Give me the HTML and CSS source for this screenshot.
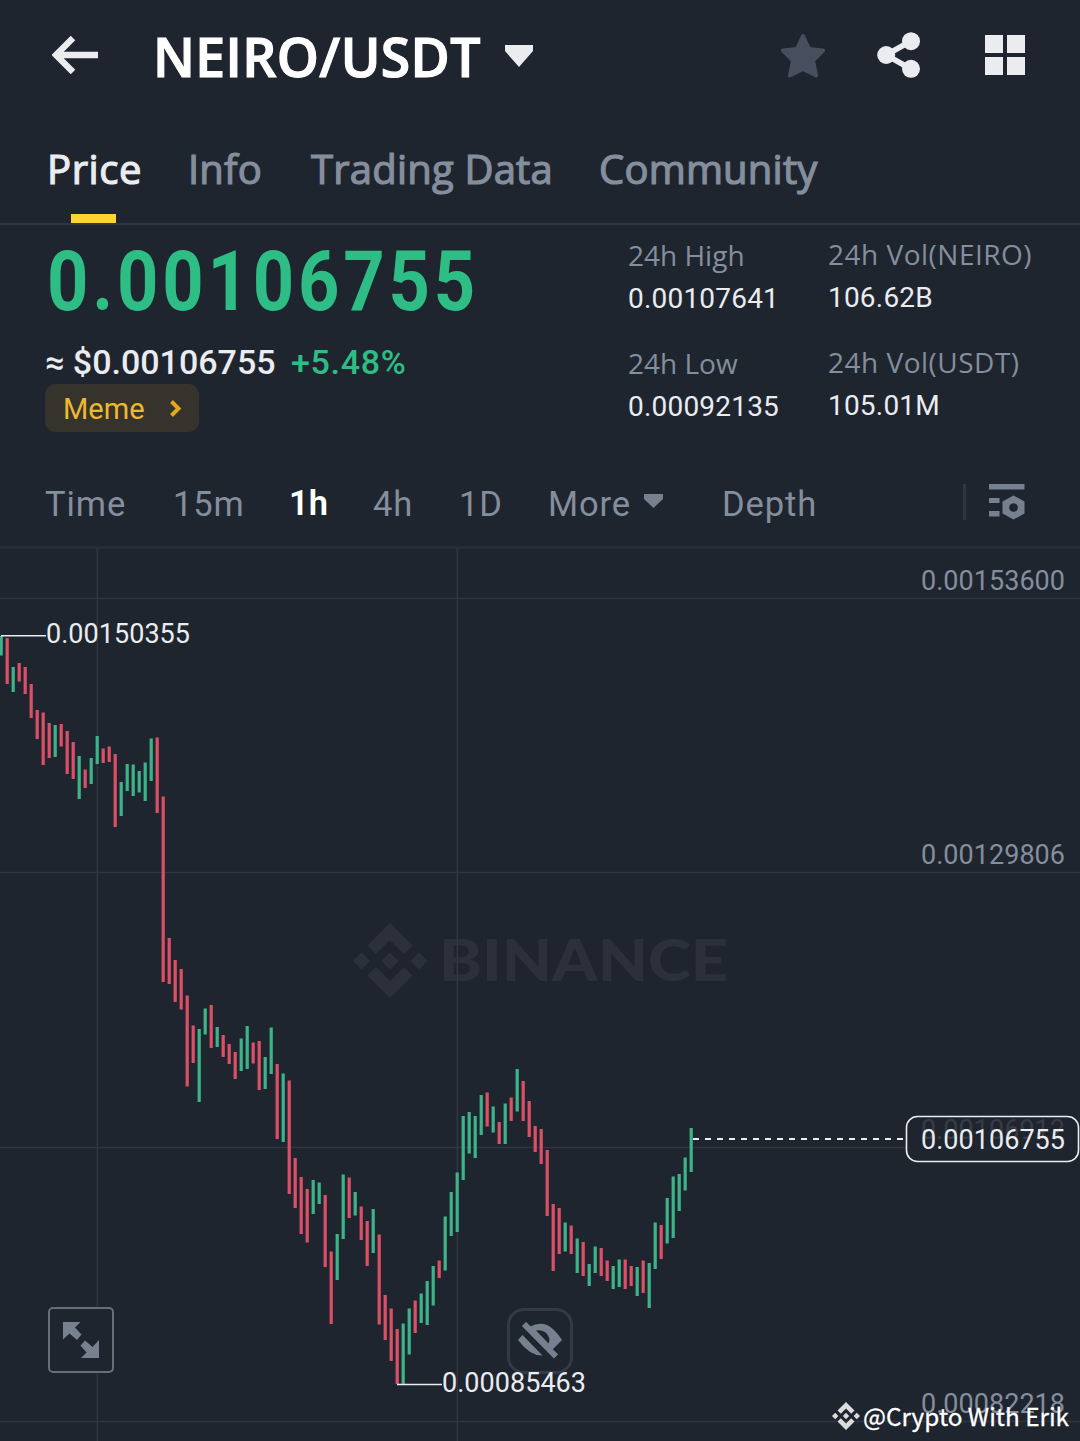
FILE: index.html
```html
<!DOCTYPE html>
<html lang="en">
<head>
    <meta charset="utf-8">
    <title>NEIRO/USDT</title>
    <link rel="stylesheet" href="styles.css">
</head>
<body>
<div class="app">
    <header class="header">
        <svg class="back" width="46" height="38" viewBox="0 0 46 38">
            <path d="M21 2 L4 19 L21 36 M3 19 H46" fill="none" stroke="#eaecef" stroke-width="6.4"/>
        </svg>
        <h1 class="pair">NEIRO/USDT</h1>
        <svg class="caret" width="28" height="23" viewBox="0 0 28 23">
            <path d="M0 1 H28 V7 L14 23 L0 7 Z" fill="#eaecef"/>
        </svg>
        <div class="actions">
            <svg width="46" height="48" viewBox="0 0 46 48">
                <path d="M24 5 L30 18 L44 19.500 L34 29.500 L37 44.500 L24 38 L11 44.500 L14 29.500 L4 19.500 L18 18 Z" fill="#474f5e" stroke="#474f5e" stroke-width="4" stroke-linejoin="round"/>
            </svg>
            <svg width="44" height="46" viewBox="0 0 44 46">
                <path d="M35 9 L10 23 L35 37" fill="none" stroke="#eaecef" stroke-width="5.5"/>
                <circle cx="10.2" cy="23" r="9" fill="#eaecef"/>
                <circle cx="35" cy="9.2" r="9" fill="#eaecef"/>
                <circle cx="35" cy="36.8" r="9" fill="#eaecef"/>
            </svg>
            <svg width="40" height="40" viewBox="0 0 40 40">
                <path d="M0 0h18v18H0z M22 0h18v18H22z M0 22h18v18H0z M22 22h18v18H22z" fill="#eaecef"/>
            </svg>
        </div>
    </header>

    <nav class="tabs">
        <a class="tab active">Price</a>
        <a class="tab">Info</a>
        <a class="tab">Trading Data</a>
        <a class="tab">Community</a>
    </nav>

    <section class="ticker">
        <div class="quote">
            <div class="last-price">0.00106755</div>
            <div class="fiat"><span class="fiat-price">≈ $0.00106755</span><span class="change">+5.48%</span></div>
            <a class="tag">
                <span class="tag-name">Meme</span>
                <svg width="12" height="17" viewBox="0 0 12 17">
                    <path d="M1.500 1.500 L8.500 8.500 L1.500 15.500" fill="none" stroke="#e0a81e" stroke-width="4"/>
                </svg>
            </a>
        </div>
        <div class="stats">
            <div class="stat">
                <div class="label">24h High</div>
                <div class="value">0.00107641</div>
            </div>
            <div class="stat vol">
                <div class="label">24h Vol(NEIRO)</div>
                <div class="value">106.62B</div>
            </div>
            <div class="stat">
                <div class="label">24h Low</div>
                <div class="value">0.00092135</div>
            </div>
            <div class="stat vol">
                <div class="label">24h Vol(USDT)</div>
                <div class="value">105.01M</div>
            </div>
        </div>
    </section>

    <nav class="intervals">
        <a>Time</a>
        <a>15m</a>
        <a class="active">1h</a>
        <a>4h</a>
        <a>1D</a>
        <a class="more">More
            <svg width="19" height="21" viewBox="0 0 19 21"><path d="M0 0 H19 V5 L9.500 14 L0 5 Z" fill="#76808f"/></svg>
        </a>
        <a>Depth</a>
        <span class="divider"></span>
        <svg width="36" height="37" viewBox="0 0 36 37">
            <path d="M0 1 H35.500 V6.500 H0 Z M0 15 H10.500 V20 H0 Z M0 28 H10.500 V33.500 H0 Z" fill="#76808f"/>
            <path fill-rule="evenodd" d="M24.500 12.500 L35.500 18.500 V30.500 L24.500 36.500 L13.500 30.500 V18.500 Z M24.500 20.200 a4.300 4.300 0 1 0 .01 0 Z" fill="#76808f"/>
        </svg>
    </nav>

    <section class="chart">
        <!-- viewBox starts at the chart's own top so y matches the page -->
        <svg class="plot" width="1080" height="893" viewBox="0 548 1080 893">
            <g class="watermark">
                <path d="M390 923 L412.500 945.500 L404 954 L390 940 L376 954 L367.500 945.500 Z"/>
                <path d="M390 998 L412.500 975.500 L404 967 L390 981 L376 967 L367.500 975.500 Z"/>
                <path d="M353 961 l8.500 -8.500 l8.500 8.500 l-8.500 8.500 Z M381.500 961 l8.500 -8.500 l8.500 8.500 l-8.500 8.500 Z M410.500 961 l8.500 -8.500 l8.500 8.500 l-8.500 8.500 Z"/>
                <text x="439" y="981" textLength="289" lengthAdjust="spacingAndGlyphs">BINANCE</text>
            </g>
            <path class="grid" d="M0 598.500 H1080 M0 872.500 H1080 M0 1147.500 H1080 M0 1421.500 H1080 M97.300 548 V1441 M457.300 548 V1441"/>
            <g class="axis">
                <text x="921" y="590" textLength="144">0.00153600</text>
                <text x="921" y="864" textLength="144">0.00129806</text>
                <text x="921" y="1413" textLength="144">0.00082218</text>
            </g>
            <g id="candles"></g>
            <path class="pointer" d="M1 635.800 H46 M397 1384.500 H442"/>
            <path class="last-line" d="M693 1139 H905"/>
            <rect class="last-box" x="906.500" y="1116.500" width="172" height="45" rx="11"/>
            <text class="ghost" x="921" y="1139" textLength="144">0.00106912</text>
            <g class="mark">
                <text x="46" y="643" textLength="144">0.00150355</text>
                <text x="921" y="1149" textLength="144">0.00106755</text>
            </g>
        </svg>
        <a class="btn expand">
            <svg width="36" height="36" viewBox="0 0 36 36">
                <path d="M0 0 H17.500 L12 5.500 L18.500 12.500 L14 18 L6.500 11.500 L0 17.500 Z M36 36 H18 L23.500 30.500 L17.500 23.500 L22 18.500 L29.500 25 L36 18 Z" fill="#76808f"/>
            </svg>
        </a>
        <a class="btn hide">
            <svg width="44" height="38" viewBox="0 0 44 38">
                <path fill-rule="evenodd" d="M12 4.500 Q21 0 29 3 Q36 6 44 18 L34 28 Z M18 8.500 L30.500 21.500 Q33 17 29 12 Q25 7.500 18 8.500 Z" fill="#76808f"/>
                <path d="M6 2 L38 34.500" stroke="#76808f" stroke-width="6" fill="none"/>
                <path d="M4.500 13 L24.500 33.500 Q12 34 0 18 Z" fill="#76808f"/>
            </svg>
        </a>
        <svg class="low-mark" width="160" height="36" viewBox="0 0 160 36"><text x="4" y="24" textLength="144">0.00085463</text></svg>
        <div class="author">
            <svg width="28" height="28" viewBox="0 0 28 28">
                <path d="M14 0 L22.500 8.500 L19.200 11.800 L14 6.600 L8.800 11.800 L5.500 8.500 Z M14 28 L22.500 19.500 L19.200 16.200 L14 21.400 L8.800 16.200 L5.500 19.500 Z M0 14 l3.200 -3.200 l3.200 3.200 l-3.200 3.200 Z M10.800 14 l3.200 -3.200 l3.200 3.200 l-3.200 3.200 Z M21.600 14 l3.200 -3.200 l3.200 3.200 l-3.200 3.200 Z" fill="#dcdcdc"/>
            </svg>
            <span>@Crypto With Erik</span>
        </div>
    </section>
</div>

<script>
    // [colour, top, bottom]
    const candles = [
        ['g', 636, 655.500], ['r', 638, 684], ['g', 667, 692], ['r', 663, 681.500], ['r', 667, 694],
        ['r', 684, 718], ['r', 710, 739], ['r', 712.500, 765], ['r', 723, 758], ['g', 725, 757],
        ['r', 724, 746.500], ['r', 731, 774], ['r', 742, 779], ['g', 756, 799], ['r', 769.500, 788],
        ['g', 758, 784], ['g', 736, 764], ['r', 748.500, 763], ['r', 746.500, 762], ['r', 754, 827],
        ['g', 782, 816], ['g', 764, 791], ['g', 764.500, 796], ['g', 771, 792.500], ['g', 762.500, 801],
        ['g', 738.500, 781], ['r', 737.500, 813], ['r', 796.500, 982], ['r', 938, 984], ['r', 960, 1002],
        ['r', 969, 1009.500], ['r', 995.500, 1086.500], ['r', 1025.500, 1063], ['g', 1029, 1102], ['g', 1008.500, 1034.500],
        ['r', 1005, 1048], ['g', 1027, 1047], ['r', 1035, 1057], ['r', 1044, 1064], ['r', 1052, 1079],
        ['g', 1038.500, 1071], ['g', 1026, 1069], ['r', 1042.500, 1063.500], ['r', 1041, 1090], ['g', 1057, 1089],
        ['g', 1027.500, 1074], ['r', 1064, 1139], ['g', 1073.500, 1142], ['r', 1080.500, 1194], ['r', 1158, 1208],
        ['r', 1177, 1234], ['r', 1189, 1242.500], ['g', 1180, 1214], ['g', 1182.500, 1204], ['r', 1195, 1267],
        ['r', 1251.500, 1324], ['g', 1234, 1280], ['g', 1174.500, 1239], ['r', 1177.500, 1218], ['g', 1192, 1215.500],
        ['r', 1206.500, 1240], ['r', 1221, 1266], ['g', 1209, 1253], ['r', 1234.500, 1324.500], ['r', 1295, 1340],
        ['r', 1308.500, 1361], ['r', 1329, 1384], ['g', 1323.500, 1384], ['g', 1308.500, 1354.500], ['r', 1300.500, 1333],
        ['g', 1293.500, 1323], ['g', 1281, 1325], ['g', 1266, 1305.500], ['r', 1260.500, 1278], ['g', 1216.500, 1270.500],
        ['g', 1192, 1236], ['g', 1172.500, 1232], ['g', 1116, 1180], ['g', 1112, 1153.500], ['g', 1116, 1158],
        ['g', 1095, 1135], ['r', 1092.500, 1126.500], ['g', 1106.500, 1132.500], ['r', 1122, 1144], ['g', 1103.500, 1144],
        ['r', 1097.500, 1121], ['g', 1069, 1111.500], ['r', 1081, 1121], ['r', 1101, 1137], ['r', 1126, 1152],
        ['r', 1129, 1164], ['r', 1150, 1216], ['r', 1204, 1271], ['r', 1208, 1254], ['g', 1222.500, 1251.500],
        ['r', 1225.500, 1254], ['g', 1238.500, 1273], ['r', 1242, 1276], ['g', 1264, 1286], ['g', 1246.500, 1273],
        ['r', 1248, 1276], ['r', 1260.500, 1281], ['g', 1266, 1289], ['g', 1259.500, 1287], ['r', 1259.500, 1289],
        ['r', 1266, 1286], ['g', 1267, 1296], ['r', 1260.500, 1293], ['g', 1263, 1308], ['g', 1222.500, 1269],
        ['r', 1225, 1259], ['g', 1198, 1243.500], ['g', 1176.500, 1238], ['g', 1174, 1211], ['g', 1157.500, 1190.500],
        ['g', 1128, 1172]
    ];
    const group = document.getElementById('candles');
    candles.forEach(([type, top, bottom], i) => {
        const rect = document.createElementNS('http://www.w3.org/2000/svg', 'rect');
        rect.setAttribute('x', i * 6 - 0.4);
        rect.setAttribute('y', top);
        rect.setAttribute('width', 3.2);
        rect.setAttribute('height', bottom - top);
        rect.setAttribute('class', type === 'g' ? 'up' : 'down');
        group.appendChild(rect);
    });
</script>
</body>
</html>
```
FILE: styles.css
```css
* { box-sizing: border-box; }
body {
    margin: 0;
    background: #1f252f;
    color: #eaecef;
    font-family: Roboto, sans-serif;
}
svg { display: block; flex: none; }
.app {
    width: 1080px;
    height: 1441px;
    overflow: hidden;
}

/* header */
.header {
    display: flex;
    align-items: center;
    height: 110px;
    padding: 0 55px 0 52px;
}
.pair {
    width: 352px;
    margin: 3px 0 0 55px;
    color: #fff;
    font: 600 53.5px/60px "Open Sans", sans-serif;
    letter-spacing: 0.4px;
    white-space: nowrap;
    -webkit-text-stroke: 1.2px #fff;
}
.actions {
    display: flex;
    align-items: center;
    margin-left: auto;
}
.actions svg { margin-left: 65px; }
.actions svg:nth-child(2) { margin-left: 51px; }

/* tabs */
.tabs {
    display: grid;
    grid-template-columns: 141px 123px 288px 1fr;
    height: 115px;
    padding-left: 47px;
    border-bottom: 2px solid #2f3641;
}
.tab {
    position: relative;
    padding-top: 29px;
    color: #848e9c;
    font: 400 40px/60px "Open Sans", sans-serif;
    letter-spacing: 0.2px;
    white-space: nowrap;
    -webkit-text-stroke: 1.2px;
}
.tab.active {
    color: #eaecef;
    letter-spacing: 0.6px;
}
.tab.active::after {
    content: "";
    position: absolute;
    left: 24px;
    bottom: 0;
    width: 45px;
    height: 9px;
    background: #fcd535;
}

/* price and 24h stats */
.ticker {
    display: flex;
    height: 235px;
}
.quote {
    width: 583px;
    padding: 16px 0 0 45px;
    margin-right: 45px;
}
.last-price {
    height: 82px;
    margin-left: 2px;
    color: #2ebd85;
    font-size: 83px;
    font-weight: 700;
    line-height: 82px;
    letter-spacing: 4.4px;
    transform: scaleX(0.87);
    transform-origin: left;
}
.fiat {
    display: flex;
    height: 61px;
    font-size: 34px;
    font-weight: 500;
    line-height: 78px;
    white-space: nowrap;
}
.fiat-price { width: 246px; }
.change {
    color: #2ebd85;
    letter-spacing: 0.7px;
}
.tag {
    display: flex;
    align-items: center;
    justify-content: space-between;
    width: 154px;
    height: 48px;
    padding: 0 17px 0 18px;
    border-radius: 10px;
    background: #35332c;
    color: #edb92e;
    font-size: 29px;
    line-height: 48px;
}
.tag-name { padding-top: 2px; }
.stats {
    display: grid;
    grid-template-columns: 200px 1fr;
    grid-auto-rows: 108px;
    flex: 1;
    padding-top: 10px;
}
.vol { margin-top: -1px; }
.label {
    color: #848e9c;
    font: 400 28px/40px "Open Sans", sans-serif;
    white-space: nowrap;
}
.vol .label { letter-spacing: 0.5px; }
.value {
    padding-top: 2px;
    font-size: 28px;
    line-height: 44px;
    letter-spacing: 0.2px;
}

/* intervals */
.intervals {
    display: grid;
    grid-template-columns: 128px 116px 84px 86px 89px 174px 241px 26px 36px;
    align-items: center;
    height: 89px;
    padding: 0 0 3px 45px;
    border-bottom: 3px solid #272d38;
    margin-bottom: -1px;
    color: #848e9c;
    font-size: 34.5px;
    letter-spacing: 0.9px;
}
.intervals a { padding-top: 5px; }
.intervals .active {
    padding-top: 3px;
    color: #fff;
    font-weight: 600;
    letter-spacing: 0;
}
.intervals .more {
    display: flex;
    align-items: center;
    gap: 13px;
}
.divider {
    width: 3px;
    height: 36px;
    background: #2f3641;
}

/* chart */
.chart {
    position: relative;
    height: 893px;
}
.plot text, .low-mark text { font-size: 27px; }
.plot .watermark { fill: #2b303b; }
.plot .watermark text {
    font-family: Lato, sans-serif;
    font-size: 57px;
    font-weight: 900;
}
.grid {
    fill: none;
    stroke: #2f3641;
    stroke-width: 1.6;
}
.axis { fill: #848e9c; }
.up { fill: #3db389; }
.down { fill: #dc4f67; }
.pointer {
    stroke: #eaecef;
    stroke-width: 1.6;
}
.last-line {
    stroke: #eaecef;
    stroke-width: 1.8;
    stroke-dasharray: 6 6;
}
.last-box {
    fill: #1f252f;
    stroke: #eaecef;
    stroke-width: 1.6;
}
.plot .ghost { fill: #363c47; }
.mark, .low-mark { fill: #eaecef; }
.btn {
    position: absolute;
    display: flex;
    align-items: center;
    justify-content: center;
    width: 66px;
    height: 66px;
}
.expand {
    left: 48px;
    top: 759px;
    border: 2px solid #666e7c;
    border-radius: 5px;
    background: #1f252f;
}
.hide {
    left: 507px;
    top: 760px;
    border: 3px solid #333a45;
    border-radius: 17px;
}
.low-mark {
    position: absolute;
    left: 438px;
    top: 820px;
}
.author {
    position: absolute;
    left: 832px;
    top: 850px;
    display: flex;
    align-items: center;
    gap: 3px;
    color: #fff;
    font: 400 24.3px/36px "Noto Sans CJK SC", sans-serif;
    white-space: nowrap;
    -webkit-text-stroke: 0.3px #fff;
}
```
